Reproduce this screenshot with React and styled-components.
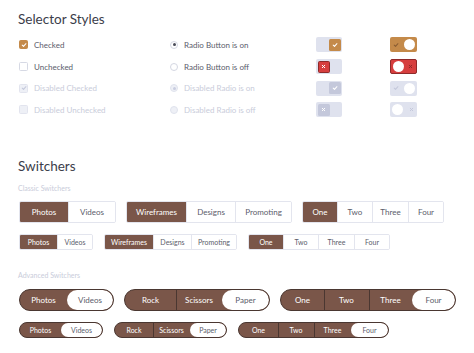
import React from 'react';
import styled, {createGlobalStyle, css} from 'styled-components';

const brown = '#7a5649';
const brownDark = '#4a3731';
const textColor = '#5b5d6b';
const mutedText = '#c9ccda';
const lightBg = '#dfe2ee';

const GlobalStyle = createGlobalStyle`
	body {
		margin: 0;
		background: #ffffff;
		font-family: 'Lato', 'Open Sans', sans-serif;
		color: ${textColor};
	}
`;

const Page = styled.div`
	width: 474px;
	height: 353px;
	padding: 10px 0 0 18px;
	box-sizing: border-box;
	overflow: hidden;
`;

const Title = styled.h2`
	margin: 0;
	font-size: 13.5px;
	font-weight: 400;
	color: #3b3d4a;
	height: 18px;
	line-height: 18px;
`;

const SelectorGrid = styled.div`
	display: grid;
	grid-template-columns: 150px 147px 74px 60px;
	grid-auto-rows: 21.7px;
	margin-top: 6px;
	align-items: center;
	padding-left: 1px;
`;

const Option = styled.div`
	display: flex;
	align-items: center;
	gap: 6px;
	font-size: 8px;
	color: ${(props) => (props.$disabled ? mutedText : textColor)};
`;

const CheckBox = styled.span`
	width: 9px;
	height: 9px;
	box-sizing: border-box;
	border-radius: 1.5px;
	display: flex;
	align-items: center;
	justify-content: center;
	border: 1px solid
		${(props) =>
			props.$checked && !props.$disabled
				? '#c48a4a'
				: props.$disabled
				? '#e2e4ee'
				: '#d6d9e4'};
	background: ${(props) =>
		props.$checked && !props.$disabled
			? '#c48a4a'
			: props.$disabled
			? '#eef0f6'
			: '#fff'};
`;

const Radio = styled.span`
	width: 8px;
	height: 8px;
	box-sizing: border-box;
	border-radius: 50%;
	margin-left: 1px;
	display: flex;
	align-items: center;
	justify-content: center;
	border: 1px solid ${(props) => (props.$disabled ? '#e0e3ed' : '#d4d7e2')};
	background: ${(props) => (props.$disabled ? '#eef0f6' : '#fff')};

	&::after {
		content: '';
		display: ${(props) => (props.$checked ? 'block' : 'none')};
		width: 3px;
		height: 3px;
		border-radius: 50%;
		background: ${(props) => (props.$disabled ? '#c9cde0' : '#4a4c58')};
	}
`;

const SquareToggle = styled.span`
	width: 26px;
	height: 15px;
	border-radius: 2px;
	background: ${lightBg};
	display: flex;
	align-items: center;
	justify-content: ${(props) => (props.$on ? 'flex-end' : 'flex-start')};
	padding: 0 1.5px;
	box-sizing: border-box;
`;

const Knob = styled.span`
	width: 12px;
	height: 12px;
	border-radius: 1.5px;
	box-sizing: border-box;
	display: flex;
	align-items: center;
	justify-content: center;
	background: ${(props) =>
		props.$disabled ? '#c4c8db' : props.$on ? '#c48a4a' : '#d63e3e'};
	border: ${(props) =>
		!props.$disabled && !props.$on ? '1px solid #8e2a2a' : 'none'};
`;

const RoundToggle = styled.span`
	width: 27px;
	height: 15px;
	border-radius: 2px;
	box-sizing: border-box;
	display: flex;
	align-items: center;
	flex-direction: ${(props) => (props.$on ? 'row' : 'row-reverse')};
	justify-content: space-between;
	padding: ${(props) => (props.$on ? '0 2px 0 3px' : '0 3px 0 2px')};
	background: ${(props) =>
		props.$disabled ? lightBg : props.$on ? '#c48a4a' : '#d63e3e'};
	border: ${(props) =>
		!props.$disabled && !props.$on ? '1px solid #8e2a2a' : 'none'};
`;

const Dot = styled.span`
	width: 11px;
	height: 11px;
	border-radius: 50%;
	background: #fff;
`;

const Section = styled.div`
	margin-top: 36px;
`;

const SubLabel = styled.div`
	font-size: 7px;
	color: ${mutedText};
	margin-top: ${(props) => props.$mt};
	height: 9px;
	line-height: 9px;
`;

const SwitchRow = styled.div`
	display: flex;
	align-items: center;
	gap: ${(props) => props.$gap};
	margin-top: ${(props) => props.$mt};
	padding-left: 1px;
`;

const Classic = styled.div`
	display: flex;
	height: ${(props) => (props.$small ? '16px' : '22px')};
	border: 1px solid #e3e5ee;
	border-radius: 2px;
	box-sizing: border-box;
	overflow: hidden;
`;

const ClassicItem = styled.div`
	width: ${(props) => props.$w}px;
	display: flex;
	align-items: center;
	justify-content: center;
	font-size: ${(props) => (props.$small ? '7px' : '8px')};
	background: ${(props) => (props.$active ? brown : '#fff')};
	color: ${(props) => (props.$active ? '#fff' : textColor)};
	border-left: 1px solid #e3e5ee;
	${(props) =>
		props.$first &&
		css`
			border-left: none;
		`}
`;

const Pill = styled.div`
	display: flex;
	height: ${(props) => (props.$small ? '16px' : '22px')};
	border-radius: 12px;
	background: ${brown};
	border: 1.5px solid ${brownDark};
	box-sizing: border-box;
	overflow: hidden;
`;

const PillItem = styled.div`
	width: ${(props) => props.$w}px;
	display: flex;
	align-items: center;
	justify-content: center;
	font-size: ${(props) => (props.$small ? '7px' : '8px')};
	color: ${(props) => (props.$active ? textColor : '#fff')};
	background: ${(props) => (props.$active ? '#fff' : 'transparent')};
	border-radius: ${(props) => (props.$active ? '12px' : '0')};
	box-shadow: ${(props) =>
		props.$divider ? `inset 1px 0 0 ${brownDark}` : 'none'};
`;

const Check = ({color, size = 6}) => (
	<svg width={size} height={size} viewBox='0 0 10 10'>
		<path
			d='M2 5.2 L4.2 7.3 L8.2 2.8'
			fill='none'
			stroke={color}
			strokeWidth='1.7'
			strokeLinecap='round'
			strokeLinejoin='round'
		/>
	</svg>
);

const Cross = ({color, size = 5}) => (
	<svg width={size} height={size} viewBox='0 0 10 10'>
		<path
			d='M2.5 2.5 L7.5 7.5 M7.5 2.5 L2.5 7.5'
			fill='none'
			stroke={color}
			strokeWidth='2'
			strokeLinecap='round'
		/>
	</svg>
);

const selectors = [
	{box: 'Checked', radio: 'Radio Button is on', on: true, disabled: false},
	{box: 'Unchecked', radio: 'Radio Button is off', on: false, disabled: false},
	{box: 'Disabled Checked', radio: 'Disabled Radio is on', on: true, disabled: true},
	{box: 'Disabled Unchecked', radio: 'Disabled Radio is off', on: false, disabled: true},
];

const ClassicSwitch = ({items, widths, small}) => (
	<Classic $small={small}>
		{items.map((item, i) => (
			<ClassicItem
				key={item}
				$w={widths[i]}
				$small={small}
				$first={i === 0}
				$active={i === 0}
			>
				{item}
			</ClassicItem>
		))}
	</Classic>
);

const PillSwitch = ({items, widths, small}) => (
	<Pill $small={small}>
		{items.map((item, i) => (
			<PillItem
				key={item}
				$w={widths[i]}
				$small={small}
				$active={i === items.length - 1}
				$divider={i > 0 && i < items.length - 1}
			>
				{item}
			</PillItem>
		))}
	</Pill>
);

const App = () => {
	return (
		<>
			<GlobalStyle />
			<Page>
				<Title>Selector Styles</Title>
				<SelectorGrid>
					{selectors.map((row) => (
						<React.Fragment key={row.box}>
							<Option $disabled={row.disabled}>
								<CheckBox $checked={row.on} $disabled={row.disabled}>
									{row.on && (
										<Check color={row.disabled ? '#c4c8db' : '#fff'} />
									)}
								</CheckBox>
								{row.box}
							</Option>
							<Option $disabled={row.disabled}>
								<Radio $checked={row.on} $disabled={row.disabled} />
								{row.radio}
							</Option>
							<SquareToggle $on={row.on}>
								<Knob $on={row.on} $disabled={row.disabled}>
									{row.on ? <Check color='#fff' /> : <Cross color='#fff' />}
								</Knob>
							</SquareToggle>
							<RoundToggle $on={row.on} $disabled={row.disabled}>
								{row.on ? (
									<Check color={row.disabled ? '#c4c8db' : '#8a5d32'} />
								) : (
									<Cross color={row.disabled ? '#c4c8db' : '#8e2a2a'} />
								)}
								<Dot />
							</RoundToggle>
						</React.Fragment>
					))}
				</SelectorGrid>

				<Section>
					<Title>Switchers</Title>
					<SubLabel $mt='9px'>Classic Switchers</SubLabel>
					<SwitchRow $gap='10px' $mt='8px'>
						<ClassicSwitch items={['Photos', 'Videos']} widths={[48, 46]} />
						<ClassicSwitch
							items={['Wireframes', 'Designs', 'Promoting']}
							widths={[59, 48, 55]}
						/>
						<ClassicSwitch
							items={['One', 'Two', 'Three', 'Four']}
							widths={[34, 34, 35, 34]}
						/>
					</SwitchRow>
					<SwitchRow $gap='11px' $mt='11px'>
						<ClassicSwitch small items={['Photos', 'Videos']} widths={[37, 34]} />
						<ClassicSwitch
							small
							items={['Wireframes', 'Designs', 'Promoting']}
							widths={[48, 37, 44]}
						/>
						<ClassicSwitch
							small
							items={['One', 'Two', 'Three', 'Four']}
							widths={[34, 34, 35, 34]}
						/>
					</SwitchRow>

					<SubLabel $mt='21px'>Advanced Switchers</SubLabel>
					<SwitchRow $gap='10px' $mt='9px'>
						<PillSwitch items={['Photos', 'Videos']} widths={[47, 46]} />
						<PillSwitch items={['Rock', 'Scissors', 'Paper']} widths={[51, 46, 47]} />
						<PillSwitch
							items={['One', 'Two', 'Three', 'Four']}
							widths={[43, 45, 43, 43]}
						/>
					</SwitchRow>
					<SwitchRow $gap='11px' $mt='11px'>
						<PillSwitch small items={['Photos', 'Videos']} widths={[41, 41]} />
						<PillSwitch
							small
							items={['Rock', 'Scissors', 'Paper']}
							widths={[38, 37, 36]}
						/>
						<PillSwitch
							small
							items={['One', 'Two', 'Three', 'Four']}
							widths={[39, 36, 37, 37]}
						/>
					</SwitchRow>
				</Section>
			</Page>
		</>
	);
};

export default App;
